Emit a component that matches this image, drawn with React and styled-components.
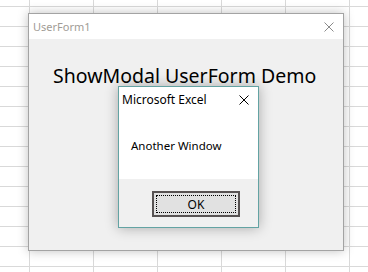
import React from 'react'
import styled, { createGlobalStyle } from 'styled-components'

const GlobalStyle = createGlobalStyle`
  html, body {
    margin: 0;
    padding: 0;
    width: 368px;
    height: 272px;
    overflow: hidden;
  }
  body {
    font-family: "Noto Sans", "Open Sans", sans-serif;
    background-color: #fff;
    background-image:
      linear-gradient(to right, #d9d9d9 1px, transparent 1px),
      linear-gradient(to bottom, #d9d9d9 1px, transparent 1px);
    background-size: 64px 20px;
    background-position: 29px 6px;
  }
`

const Sheet = styled.div`
  padding: 13px 0 0 28px;
`

const Window = styled.div`
  position: relative;
  width: 314px;
  height: 236px;
  border: 1px solid #a3a3a3;
  box-shadow: 0 0 10px rgba(0, 0, 0, 0.25);
  background: #f0f0f0;
  display: flex;
  flex-direction: column;
`

const TitleBar = styled.div`
  height: 25px;
  flex: none;
  background: #fff;
  display: flex;
  align-items: center;
  justify-content: space-between;
  padding: 0 9px 0 4px;
`

const Title = styled.span`
  font-size: ${p => p.size || 12}px;
  color: ${p => p.color || '#000'};
`

const Close = ({ color, size = 10 }) => (
  <svg width={size} height={size} viewBox="0 0 10 10">
    <path d="M0.5 0.5L9.5 9.5M9.5 0.5L0.5 9.5" stroke={color} strokeWidth="1" fill="none" />
  </svg>
)

const Heading = styled.h1`
  margin: 24px 0 0 24px;
  font-size: 19.5px;
  font-weight: normal;
  color: #000;
  line-height: 26px;
`

const MsgBox = styled.div`
  position: absolute;
  left: 89px;
  top: 72px;
  width: 139px;
  height: 140px;
  border: 1px solid #63a3a3;
  box-shadow: 0 0 12px rgba(0, 0, 0, 0.3);
  background: #fff;
  display: flex;
  flex-direction: column;
`

const BoxTitle = styled(TitleBar)`
  padding: 0 9px 0 3px;
`

const Message = styled.div`
  flex: 1;
  padding: 26px 0 0 12px;
  font-size: 11.5px;
  line-height: 16px;
  color: #000;
`

const Footer = styled.div`
  height: 48px;
  flex: none;
  background: #f0f0f0;
  padding: 12px 0 0 33px;
  box-sizing: border-box;
`

const Button = styled.button`
  width: 88px;
  height: 26px;
  padding: 2px;
  background: #e1e1e1;
  border: 2px solid #575252;
  font-family: inherit;
  font-size: 12px;
  color: #000;
  cursor: pointer;
  box-sizing: border-box;
`

const Focus = styled.span`
  display: flex;
  align-items: center;
  justify-content: center;
  width: 100%;
  height: 100%;
  border: 1px dotted #000;
  box-sizing: border-box;
`

export default function App() {
  return (
    <>
      <GlobalStyle />
      <Sheet>
        <Window>
          <TitleBar>
            <Title size={11} color="#a19c96">UserForm1</Title>
            <Close color="#8a8a8a" />
          </TitleBar>
          <Heading>ShowModal UserForm Demo</Heading>
          <MsgBox>
            <BoxTitle>
              <Title>Microsoft Excel</Title>
              <Close color="#000" />
            </BoxTitle>
            <Message>Another Window</Message>
            <Footer>
              <Button>
                <Focus>OK</Focus>
              </Button>
            </Footer>
          </MsgBox>
        </Window>
      </Sheet>
    </>
  )
}
